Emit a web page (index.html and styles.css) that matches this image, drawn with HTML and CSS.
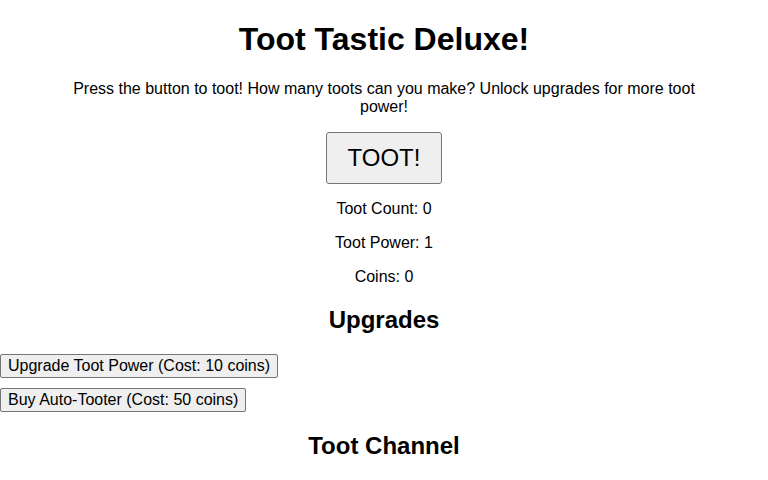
FILE: index.html
```html
<!DOCTYPE html>
<html>
<head>
<meta charset="utf-8">
<link rel="stylesheet" href="styles.css">
</head>
<body>
<h1 class="title">Toot Tastic Deluxe!</h1>
<p class="intro">Press the button to toot! How many toots can you make? Unlock upgrades for more toot power!</p>
<div class="toot-wrap"><button class="toot-btn">TOOT!</button></div>
<p class="stat">Toot Count: 0</p>
<p class="stat">Toot Power: 1</p>
<p class="stat">Coins: 0</p>
<h2 class="section">Upgrades</h2>
<button class="upgrade">Upgrade Toot Power (Cost: 10 coins)</button>
<button class="upgrade">Buy Auto-Tooter (Cost: 50 coins)</button>
<h2 class="section">Toot Channel</h2>
</body>
</html>
```
FILE: styles.css
```css
body {
  margin: 0;
  font-family: "Liberation Sans", Arial, sans-serif;
  color: #000;
  background: #fff;
  text-align: center;
}
.title {
  font-size: 32px;
  margin: 21.44px 0;
}
.intro {
  max-width: 640px;
  margin: 16px auto;
  font-size: 16px;
  line-height: 18px;
}
.toot-wrap {
  line-height: 0;
}
.toot-btn {
  font-family: "Liberation Sans", Arial, sans-serif;
  font-size: 24px;
  line-height: 28px;
  padding: 11px 20px;
  background: #efefef;
  border: 1px solid #767676;
  border-radius: 3px;
  color: #000;
  width: 116px;
}
.stat {
  margin: 16px 0;
  font-size: 16px;
  line-height: 18px;
}
.section {
  font-size: 24px;
  margin: 19.92px 0;
}
.upgrade {
  display: block;
  margin: 10px 0;
  font-family: "Liberation Sans", Arial, sans-serif;
  font-size: 16px;
  line-height: 18px;
  padding: 2px 7px;
  background: #efefef;
  border: 1px solid #767676;
  border-radius: 2px;
  color: #000;
}
```
